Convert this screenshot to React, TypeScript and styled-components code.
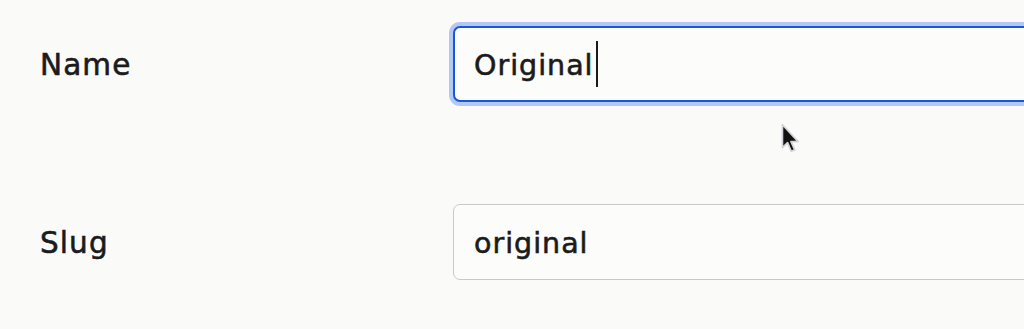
import styled, { createGlobalStyle } from "styled-components";

const GlobalStyle = createGlobalStyle`
	html,
	body {
		margin: 0;
		padding: 0;
		background: #fafaf8;
		overflow: hidden;
	}
`;

const Page = styled.div`
	position: relative;
	width: 1024px;
	height: 329px;
	overflow: hidden;
	box-sizing: border-box;
	padding: 26px 0 0 40px;
	font-family: "DejaVu Sans", "Liberation Sans", sans-serif;
	color: #1b1b1b;
	-webkit-text-stroke: 0.6px #1b1b1b;
`;

const Form = styled.div`
	display: grid;
	grid-template-columns: 413px 640px;
	row-gap: 102px;
	align-items: center;
`;

const Label = styled.div`
	font-size: 29.5px;
	letter-spacing: 1.1px;
	line-height: 1;
	padding-top: 3px;
`;

const Field = styled.div<{ $focused?: boolean }>`
	box-sizing: border-box;
	height: 76px;
	display: flex;
	align-items: center;
	padding: 3px 0 0 ${(p) => (p.$focused ? "19px" : "20px")};
	border-radius: 7px;
	background: #fcfcfb;
	border: ${(p) => (p.$focused ? "2px solid #1757e0" : "1px solid #c9c9c9")};
	box-shadow: ${(p) => (p.$focused ? "0 0 0 4px #b3c8f2" : "none")};
	font-size: 28.5px;
	letter-spacing: 1px;
`;

const Caret = styled.span`
	display: inline-block;
	width: 2px;
	height: 46px;
	margin: -3px 0 0 2px;
	background: #1b1b1b;
`;

const Pointer = styled.svg`
	position: absolute;
	left: 781px;
	top: 123px;
`;

export default function App() {
	return (
		<>
			<GlobalStyle />
			<Page>
				<Form>
					<Label>Name</Label>
					<Field $focused>
						Original
						<Caret />
					</Field>
					<Label>Slug</Label>
					<Field>original</Field>
				</Form>
				<Pointer width="20" height="32" viewBox="0 0 14 22">
					<path
						d="M1 1 L1 17 L4.6 13.6 L7.2 19.6 L9.6 18.6 L7 12.8 L12 12.8 Z"
						fill="#111"
						stroke="#d4d4d8"
						strokeWidth="1.2"
						strokeLinejoin="round"
					/>
				</Pointer>
			</Page>
		</>
	);
}
